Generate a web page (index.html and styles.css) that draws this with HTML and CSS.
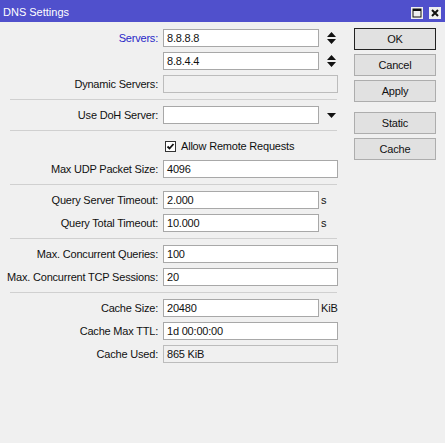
FILE: index.html
```html
<!DOCTYPE html>
<html lang="en">
<head>
  <meta charset="UTF-8">
  <title>DNS Settings</title>
  <link rel="stylesheet" href="styles.css">
</head>
<body>

  <div class="window">
    <!-- Title bar -->
    <div class="titlebar">
      <span class="title">DNS Settings</span>
      <div class="title-btns">
        <div class="tbtn">
          <svg width="12" height="12" viewBox="0 0 12 12"><rect x="2" y="2" width="8" height="8" fill="none" stroke="#111" stroke-width="1"/><rect x="2" y="2" width="8" height="2" fill="#111"/></svg>
        </div>
        <div class="tbtn">
          <svg width="12" height="12" viewBox="0 0 12 12"><path d="M3 3 L9 9 M9 3 L3 9" stroke="#111" stroke-width="2"/></svg>
        </div>
      </div>
    </div>

    <div class="content">
      <!-- Form -->
      <div class="form">
        <div class="row">
          <label class="active">Servers:</label>
          <div class="field short">8.8.8.8</div>
          <span class="suffix"><svg class="spin" width="9" height="12" viewBox="0 0 9 12"><path d="M0 5 L4.5 0 L9 5 Z M0 7 L9 7 L4.5 12 Z" fill="#111"/></svg></span>
        </div>
        <div class="row">
          <label></label>
          <div class="field short">8.8.4.4</div>
          <span class="suffix"><svg class="spin" width="9" height="12" viewBox="0 0 9 12"><path d="M0 5 L4.5 0 L9 5 Z M0 7 L9 7 L4.5 12 Z" fill="#111"/></svg></span>
        </div>
        <div class="row">
          <label>Dynamic Servers:</label>
          <div class="field full disabled"></div>
        </div>

        <div class="sep"></div>

        <div class="row">
          <label>Use DoH Server:</label>
          <div class="field short"></div>
          <span class="suffix"><svg class="spin" width="9" height="5" viewBox="0 0 9 5"><path d="M0 0 L9 0 L4.5 5 Z" fill="#111"/></svg></span>
        </div>

        <div class="sep"></div>

        <div class="row">
          <label></label>
          <span class="checkbox">
            <svg width="11" height="11" viewBox="0 0 11 11"><rect x="0.5" y="0.5" width="10" height="10" fill="#fff" stroke="#333"/><path d="M2.5 5.5 L4.5 7.5 L8.5 3" fill="none" stroke="#111" stroke-width="1.8"/></svg>
          </span>
          <span class="check-label">Allow Remote Requests</span>
        </div>
        <div class="row">
          <label>Max UDP Packet Size:</label>
          <div class="field full">4096</div>
        </div>

        <div class="sep"></div>

        <div class="row">
          <label>Query Server Timeout:</label>
          <div class="field short">2.000</div>
          <span class="suffix">s</span>
        </div>
        <div class="row">
          <label>Query Total Timeout:</label>
          <div class="field short">10.000</div>
          <span class="suffix">s</span>
        </div>

        <div class="sep"></div>

        <div class="row">
          <label>Max. Concurrent Queries:</label>
          <div class="field full">100</div>
        </div>
        <div class="row">
          <label>Max. Concurrent TCP Sessions:</label>
          <div class="field full">20</div>
        </div>

        <div class="sep"></div>

        <div class="row">
          <label>Cache Size:</label>
          <div class="field short">20480</div>
          <span class="suffix">KiB</span>
        </div>
        <div class="row">
          <label>Cache Max TTL:</label>
          <div class="field full">1d 00:00:00</div>
        </div>
        <div class="row">
          <label>Cache Used:</label>
          <div class="field full disabled">865 KiB</div>
        </div>
      </div>

      <!-- Buttons -->
      <div class="buttons">
        <button class="btn default">OK</button>
        <button class="btn">Cancel</button>
        <button class="btn">Apply</button>
        <button class="btn gap">Static</button>
        <button class="btn">Cache</button>
      </div>
    </div>
  </div>

</body>
</html>
```

FILE: styles.css
```css
* {
  margin: 0;
  padding: 0;
  box-sizing: border-box;
}

body {
  font-family: "Liberation Sans", Arial, sans-serif;
  font-size: 11px;
  color: #111;
  background: #f0f0f0;
}

.window {
  width: 445px;
  height: 443px;
  background: #f0f0f0;
  overflow: hidden;
}

/* Title bar */
.titlebar {
  height: 22px;
  background: #5050cc;
  display: flex;
  align-items: center;
  justify-content: space-between;
  padding: 2px 4px 0 3px;
}

.title {
  color: #fff;
  font-size: 11px;
}

.title-btns {
  display: flex;
  gap: 6px;
  margin-top: 1px;
}

.tbtn {
  width: 12px;
  height: 12px;
  background: #f0f0f0;
  display: flex;
}

/* Main area */
.content {
  display: flex;
}

.form {
  width: 338px;
  padding-top: 7px;
  display: flex;
  flex-direction: column;
  gap: 5px;
}

.row {
  display: flex;
  align-items: center;
  height: 18px;
  letter-spacing: -0.2px;
}

.row label {
  width: 158px;
  margin-right: 5px;
  text-align: right;
  white-space: nowrap;
}

.row label.active {
  color: #2828c8;
}

.field {
  height: 18px;
  line-height: 16px;
  padding-left: 3px;
  background: #fff;
  border: 1px solid #a8a8a8;
  white-space: nowrap;
}

.field.short {
  width: 156px;
}

.field.full {
  width: 175px;
}

.field.disabled {
  background: #f0f0f0;
  border-color: #bcbcbc;
}

.suffix {
  width: 19px;
  padding-left: 2px;
  display: flex;
  align-items: center;
}

.suffix .spin {
  margin-left: 6px;
}

.checkbox {
  display: flex;
  margin-left: 2px;
  margin-right: 5px;
}

.sep {
  margin: 1px 0 1px 10px;
  width: 327px;
  height: 1px;
  background: #d0d0d0;
}

/* Button column */
.buttons {
  padding-top: 6px;
  margin-left: 16px;
  display: flex;
  flex-direction: column;
  gap: 4px;
}

.btn {
  width: 82px;
  height: 22px;
  background: #e1e1e1;
  border: 1px solid #adadad;
  font-family: "Liberation Sans", Arial, sans-serif;
  font-size: 11px;
  letter-spacing: -0.2px;
  color: #111;
}

.btn.default {
  border-color: #222;
}

.btn.gap {
  margin-top: 6px;
}
```
